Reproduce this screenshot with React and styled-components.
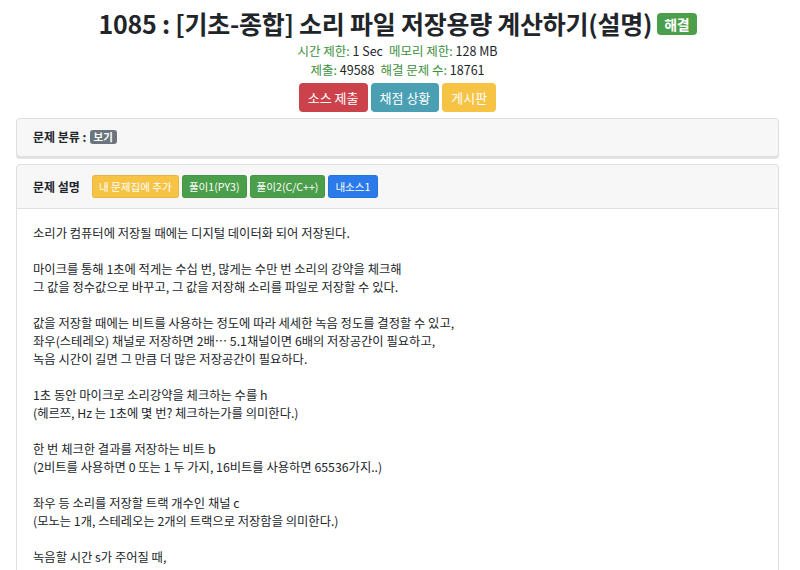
import React from 'react';
import styled, { createGlobalStyle } from 'styled-components';

const GlobalStyle = createGlobalStyle`
	* { box-sizing: border-box; }
	body {
		margin: 0;
		background: #fff;
		color: #212529;
		font-family: "Noto Sans CJK KR", "Noto Sans", sans-serif;
	}
`;

const COLORS = {
	danger: '#cc424b',
	info: '#4a9fb3',
	warning: '#f6c344',
	success: '#4b9e4a',
	primary: '#2a7ae9',
	secondary: '#6c757d',
};

const problemText = [
	'소리가 컴퓨터에 저장될 때에는 디지털 데이터화 되어 저장된다.',
	'',
	'마이크를 통해 1초에 적게는 수십 번, 많게는 수만 번 소리의 강약을 체크해',
	'그 값을 정수값으로 바꾸고, 그 값을 저장해 소리를 파일로 저장할 수 있다.',
	'',
	'값을 저장할 때에는 비트를 사용하는 정도에 따라 세세한 녹음 정도를 결정할 수 있고,',
	'좌우(스테레오) 채널로 저장하면 2배… 5.1채널이면 6배의 저장공간이 필요하고,',
	'녹음 시간이 길면 그 만큼 더 많은 저장공간이 필요하다.',
	'',
	'1초 동안 마이크로 소리강약을 체크하는 수를 h',
	'(헤르쯔, Hz 는 1초에 몇 번? 체크하는가를 의미한다.)',
	'',
	'한 번 체크한 결과를 저장하는 비트 b',
	'(2비트를 사용하면 0 또는 1 두 가지, 16비트를 사용하면 65536가지..)',
	'',
	'좌우 등 소리를 저장할 트랙 개수인 채널 c',
	'(모노는 1개, 스테레오는 2개의 트랙으로 저장함을 의미한다.)',
	'',
	'녹음할 시간 s가 주어질 때,',
];

const App = () => (
	<>
		<GlobalStyle />
		<Page>
			<Header>
				<Title>
					1085 : [기초-종합] 소리 파일 저장용량 계산하기(설명)
					<SolvedBadge>해결</SolvedBadge>
				</Title>
				<Info>
					<Label>시간 제한:</Label> 1 Sec<Label $gap>메모리 제한:</Label> 128 MB
				</Info>
				<Info>
					<Label>제출:</Label> 49588<Label $gap>해결 문제 수:</Label> 18761
				</Info>
				<ButtonRow>
					<Button color={COLORS.danger}>소스 제출</Button>
					<Button color={COLORS.info}>채점 상황</Button>
					<Button color={COLORS.warning}>게시판</Button>
				</ButtonRow>
			</Header>

			<Card>
				<CardHeader $solo>
					<HeaderTitle>문제 분류 :</HeaderTitle>
					<TagBadge>보기</TagBadge>
				</CardHeader>
			</Card>

			<Card>
				<CardHeader>
					<HeaderTitle>문제 설명</HeaderTitle>
					<SmallButtons>
						<SmallButton color={COLORS.warning}>내 문제집에 추가</SmallButton>
						<SmallButton color={COLORS.success}>풀이1(PY3)</SmallButton>
						<SmallButton color={COLORS.success}>풀이2(C/C++)</SmallButton>
						<SmallButton color={COLORS.primary}>내소스1</SmallButton>
					</SmallButtons>
				</CardHeader>
				<CardBody>
					{problemText.map((line, i) => (
						<Line key={i}>{line || '\u00a0'}</Line>
					))}
				</CardBody>
			</Card>
		</Page>
	</>
);

const Page = styled.div`
	padding: 0 21px 0 16px;
	height: 570px;
	overflow: hidden;
`;

const Header = styled.div`
	display: flex;
	flex-direction: column;
	align-items: center;
	padding-top: 5px;
`;

const Title = styled.h1`
	margin: 0;
	font-size: 25px;
	font-weight: 700;
	line-height: 36px;
	letter-spacing: -0.25px;
	display: flex;
	align-items: center;
	gap: 5px;
`;

const SolvedBadge = styled.span`
	display: inline-block;
	background: ${COLORS.success};
	color: #fff;
	font-size: 14px;
	font-weight: 700;
	line-height: 22px;
	padding: 0 7px;
	border-radius: 4px;
	margin-top: 2px;
`;

const Info = styled.div`
	font-size: 12.5px;
	line-height: 19px;
	color: #212529;
`;

const Label = styled.span`
	color: #3d8f3d;
	margin-left: ${(p) => (p.$gap ? '6px' : '0')};
`;

const ButtonRow = styled.div`
	display: flex;
	gap: 3px;
	margin-top: 4px;
	margin-bottom: 6px;
`;

const Button = styled.span`
	display: inline-block;
	background: ${(p) => p.color};
	color: #fff;
	font-size: 13px;
	line-height: 29px;
	padding: 0 9px;
	border-radius: 4px;
`;

const Card = styled.div`
	border: 1px solid #dfdfdf;
	border-radius: 4px;
	background: #f7f7f7;
	margin-bottom: 7px;
	box-shadow: 0 2px 0 #e2e2e2;
`;

const CardHeader = styled.div`
	display: flex;
	align-items: center;
	gap: ${(p) => (p.$solo ? '3px' : '12px')};
	padding: ${(p) => (p.$solo ? '9px 16px 10px' : '10px 16px')};
	border-bottom: ${(p) => (p.$solo ? 'none' : '1px solid #dfdfdf')};
`;

const HeaderTitle = styled.span`
	font-size: 12px;
	font-weight: 700;
	line-height: 18px;
`;

const TagBadge = styled.span`
	background: ${COLORS.secondary};
	color: #fff;
	font-size: 10.5px;
	font-weight: 700;
	line-height: 14px;
	padding: 0 4px;
	border-radius: 3px;
`;

const SmallButtons = styled.div`
	display: flex;
	gap: 3px;
`;

const SmallButton = styled.span`
	background: ${(p) => p.color};
	color: #fff;
	font-size: 10.6px;
	line-height: 21px;
	padding: 0 6px;
	border-radius: 3px;
	border: 1px solid rgba(0, 0, 0, 0.06);
`;

const CardBody = styled.div`
	background: #fff;
	padding: 15px 16px;
`;

const Line = styled.div`
	font-size: 12.3px;
	line-height: 18px;
	white-space: pre;
`;

export default App;
